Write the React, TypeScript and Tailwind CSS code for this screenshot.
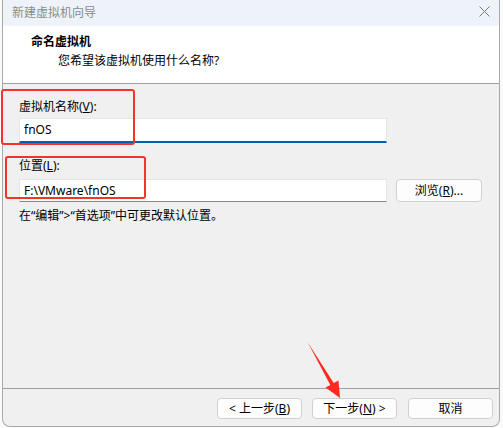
import React from 'react'

const font = {
  fontFamily: '"Noto Sans", "Noto Sans CJK SC", sans-serif',
}

function Btn({ children, className = '' }: { children: React.ReactNode; className?: string }) {
  return (
    <div
      className={`flex h-[21px] w-[85px] items-center justify-center rounded-[4px] border border-[#d0d0d0] bg-[#fdfdfd] text-[12px] leading-[16px] text-black ${className}`}
    >
      {children}
    </div>
  )
}

export default function App() {
  return (
    <div className="relative h-[428px] w-[503px] overflow-hidden bg-[#fafafa]" style={font}>
      <div className="ml-[2px] flex h-[427px] w-[498px] flex-col rounded-b-[8px] border-x border-b border-[#a9a9a9] bg-[#f0f0f0]">
        {/* Title bar */}
        <div className="flex h-[26px] shrink-0 items-center justify-between bg-[#eef2f9] pl-[9px] pr-[9px]">
          <span className="text-[12px] leading-[16px] text-[#8c8c8c]">新建虚拟机向导</span>
          <svg width="11" height="11" viewBox="0 0 11 11" className="mb-[4px]">
            <path d="M0.5 0.5 L10.5 10.5 M10.5 0.5 L0.5 10.5" stroke="#7a7a7a" strokeWidth="1" />
          </svg>
        </div>

        {/* Header */}
        <div className="h-[58px] shrink-0 border-b border-[#a0a0a0] bg-white pl-[28px] pt-[8px]">
          <div className="text-[12px] font-bold leading-[16px] text-black">命名虚拟机</div>
          <div className="ml-[27px] mt-[3px] text-[12px] leading-[16px] text-black">您希望该虚拟机使用什么名称?</div>
        </div>

        {/* Body */}
        <div className="flex-1 pl-[16px] pt-[15px]">
          <div className="text-[12px] leading-[16px] text-black">
            虚拟机名称(<span className="underline">V</span>):
          </div>
          <div className="mt-[3px] flex h-[25px] w-[368px] items-center border border-b-2 border-[#e6e6e6] border-b-[#005fb8] bg-white pl-[4px] text-[12px] leading-[16px] text-black">
            fnOS
          </div>

          <div className="mt-[15px] text-[12px] leading-[16px] text-black">
            位置(<span className="underline">L</span>):
          </div>
          <div className="mt-[5px] flex items-center">
            <div className="flex h-[23px] w-[368px] items-center border border-[#e6e6e6] border-b-[#8a8a8a] bg-white pl-[4px] text-[12px] leading-[16px] text-black">
              F:\VMware\fnOS
            </div>
            <Btn className="ml-[9px] h-[23px] w-[86px]">
              浏览(<span className="underline">R</span>)...
            </Btn>
          </div>

          <div className="mt-[6px] text-[12px] leading-[16px] text-black">在“编辑”&gt;“首选项”中可更改默认位置。</div>
        </div>

        {/* Footer */}
        <div className="flex shrink-0 justify-end border-t border-[#a0a0a0] pb-[7px] pr-[6px] pt-[9px]">
          <Btn>
            &lt; 上一步(<span className="underline">B</span>)
          </Btn>
          <Btn className="ml-[10px]">
            下一步(<span className="underline">N</span>) &gt;
          </Btn>
          <Btn className="ml-[11px]">取消</Btn>
        </div>
      </div>

      {/* Annotations */}
      <div className="absolute left-[1px] top-[89px] h-[56px] w-[134px] rounded-[3px] border-2 border-[#f5332b]" />
      <div className="absolute left-[5px] top-[156px] h-[43px] w-[141px] rounded-[3px] border-2 border-[#f5332b]" />
      <svg className="pointer-events-none absolute left-0 top-0" width="503" height="428">
        <polygon
          points="307.5,342 333.7,383 338.5,380.5 340,398 325.5,387.5 330.3,385"
          fill="#ff2a1f"
        />
      </svg>
    </div>
  )
}
